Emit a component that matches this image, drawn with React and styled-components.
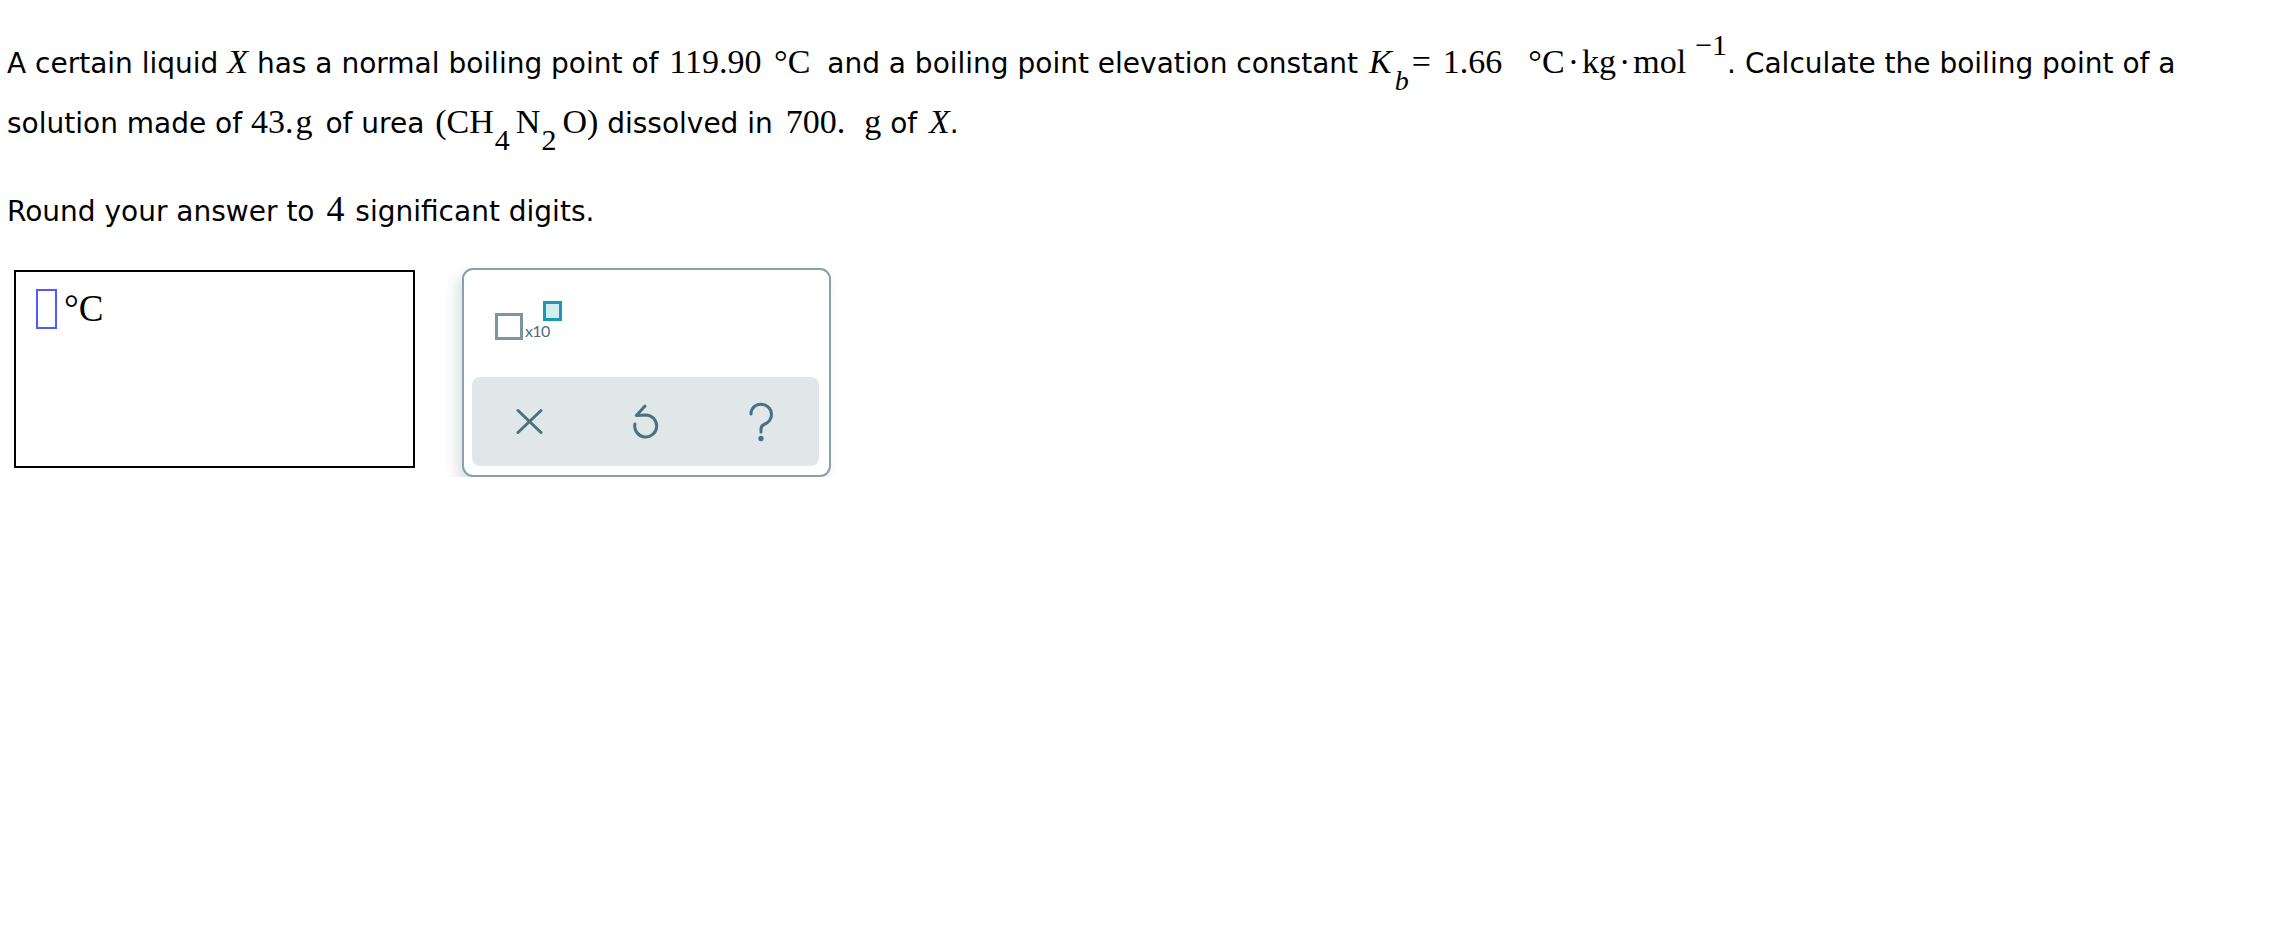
import React from "react";
import styled, { createGlobalStyle } from "styled-components";

const GlobalStyle = createGlobalStyle`
  html, body {
    margin: 0;
    padding: 0;
    background: #ffffff;
  }
  body {
    font-family: "DejaVu Sans", Verdana, sans-serif;
    color: #000000;
  }
`;

const Page = styled.div`
  padding: 34px 0 0 7px;
`;

const Para = styled.p`
  margin: 0 0 ${(p) => p.$gap || 0}px 0;
  font-size: 28px;
  line-height: 60px;
  white-space: nowrap;
`;

const M = styled.span`
  font-family: "Liberation Serif", "Times New Roman", serif;
  font-size: ${(p) => p.$size || 34}px;
  line-height: 1;
  font-style: ${(p) => (p.$italic ? "italic" : "normal")};
  margin: 0 ${(p) => p.$after || 0}px 0 ${(p) => p.$before || 0}px;
`;

const Sub = styled.span`
  font-size: ${(p) => p.$size || 28}px;
  line-height: 0;
  vertical-align: -17px;
  margin: 0 ${(p) => p.$after || 0}px 0 ${(p) => p.$shift || 0}px;
  font-style: ${(p) => (p.$italic ? "italic" : "normal")};
`;

const Sup = styled.span`
  font-size: 30px;
  line-height: 0;
  vertical-align: 18px;
  margin-left: 9px;
`;

const Op = styled.span`
  margin: 0 ${(p) => p.$right || 0}px 0 ${(p) => p.$left || 0}px;
`;

const AnswerRow = styled.div`
  display: flex;
  align-items: flex-start;
  gap: 47px;
  margin: 26px 0 0 7px;
`;

const AnswerBox = styled.div`
  box-sizing: border-box;
  width: 401px;
  height: 198px;
  margin-top: 2px;
  border: 2px solid #000000;
  padding: 17px 20px;
  display: flex;
  align-items: flex-start;
  gap: 7px;
`;

const Cursor = styled.span`
  box-sizing: border-box;
  width: 21px;
  height: 40px;
  border: 2px solid #4a5cff;
`;

const Unit = styled.span`
  font-family: "Liberation Serif", "Times New Roman", serif;
  font-size: 37px;
  line-height: 37px;
  margin-top: 1px;
`;

const Panel = styled.div`
  box-sizing: border-box;
  width: 369px;
  height: 209px;
  border: 2px solid #86a1a8;
  border-radius: 11px;
  padding: 8px 10px 9px 8px;
  background: #ffffff;
  box-shadow: -5px 8px 14px rgba(40, 60, 70, 0.16);
  display: flex;
  flex-direction: column;
`;

const Tools = styled.div`
  box-sizing: border-box;
  height: 99px;
  padding: 23px 0 0 23px;
`;

const ExpButton = styled.div`
  display: inline-flex;
  align-items: flex-start;
  height: 39px;
`;

const BaseBox = styled.span`
  box-sizing: border-box;
  width: 28px;
  height: 27px;
  margin-top: 12px;
  border: 3px solid #7b969d;
`;

const ExpLabel = styled.span`
  align-self: flex-end;
  margin: 0 0 1px 2px;
  font-family: Lato, "Open Sans", sans-serif;
  font-size: 16px;
  line-height: 16px;
  letter-spacing: -0.6px;
  color: #4e6f7b;
`;

const PowerBox = styled.span`
  box-sizing: border-box;
  width: 19px;
  height: 20px;
  margin-left: -7px;
  border: 3px solid #1b9ab4;
  background: #d2eef3;
`;

const ActionBar = styled.div`
  flex: 1;
  border-radius: 8px;
  background: #e0e7e9;
  display: grid;
  grid-template-columns: repeat(3, 1fr);
  align-items: center;
  justify-items: center;
`;

const IconButton = styled.button`
  border: 0;
  padding: 0;
  background: transparent;
  display: flex;
  align-items: center;
  justify-content: center;
  color: #4b7180;
`;

const ClearIcon = () => (
  <svg width="27" height="27" viewBox="0 0 27 27" fill="none" stroke="currentColor" strokeWidth="3" strokeLinecap="round">
    <path d="M2 2.5 L25 24.5 M25 2.5 L2 24.5" />
  </svg>
);

const UndoIcon = () => (
  <svg width="28" height="36" viewBox="0 0 28 36" fill="none" stroke="currentColor" strokeWidth="3" strokeLinecap="round" strokeLinejoin="round">
    <path d="M14 2 L5.3 11.5 L14.7 11 A11 11 0 1 1 3.9 20" />
  </svg>
);

const HelpIcon = () => (
  <svg width="26" height="44" viewBox="0 0 26 44" fill="none" stroke="currentColor" strokeWidth="3" strokeLinecap="round">
    <path d="M3 14 C3 8 7.5 4.3 13 4.3 C18.5 4.3 23.5 8.5 23.5 14.5 C23.5 20 19.5 23 16 24.5 C14 25.3 13 27 13 29.5 L13 32" />
    <circle cx="13" cy="38.5" r="1.2" fill="currentColor" />
  </svg>
);

export default function App() {
  return (
    <>
      <GlobalStyle />
      <Page>
        <Para $gap={28}>
          A certain liquid <M $italic>X</M> has a normal boiling point of{" "}
          <M $before={2} $after={8}>
            119.90<Op $left={4}>&nbsp;°C</Op>
          </M>{" "}
          and a boiling point elevation constant{" "}
          <M $before={2}>
            <i>K</i>
            <Sub $italic $shift={3}>b</Sub>
            <Op $left={3} $right={12}>=</Op>1.66&nbsp;&nbsp;<Op $left={9}>°C</Op>
            <Op $left={3} $right={3}>·</Op>kg<Op $left={3} $right={3}>·</Op>mol
            <Sup>−1</Sup>
          </M>
          . Calculate the boiling point of a
          <br />
          solution made of{" "}
          <M $after={4}>
            43.<Op $left={2}>g</Op>
          </M>{" "}
          of urea{" "}
          <M $before={2}>
            (CH<Sub $size={30} $shift={1} $after={6}>4</Sub>N<Sub $size={30} $shift={1} $after={6}>2</Sub>O)
          </M>{" "}
          dissolved in{" "}
          <M $before={4}>
            700.&nbsp;&nbsp;<Op $left={2}>g</Op>
          </M>{" "}
          of <M $italic $before={3}>X</M>.
        </Para>
        <Para>
          Round your answer to{" "}
          <M $size={36} $before={3} $after={2}>
            4
          </M>{" "}
          significant digits.
        </Para>
        <AnswerRow>
          <AnswerBox>
            <Cursor />
            <Unit>°C</Unit>
          </AnswerBox>
          <Panel>
            <Tools>
              <ExpButton>
                <BaseBox />
                <ExpLabel>x10</ExpLabel>
                <PowerBox />
              </ExpButton>
            </Tools>
            <ActionBar>
              <IconButton aria-label="clear">
                <ClearIcon />
              </IconButton>
              <IconButton aria-label="undo">
                <UndoIcon />
              </IconButton>
              <IconButton aria-label="help">
                <HelpIcon />
              </IconButton>
            </ActionBar>
          </Panel>
        </AnswerRow>
      </Page>
    </>
  );
}
